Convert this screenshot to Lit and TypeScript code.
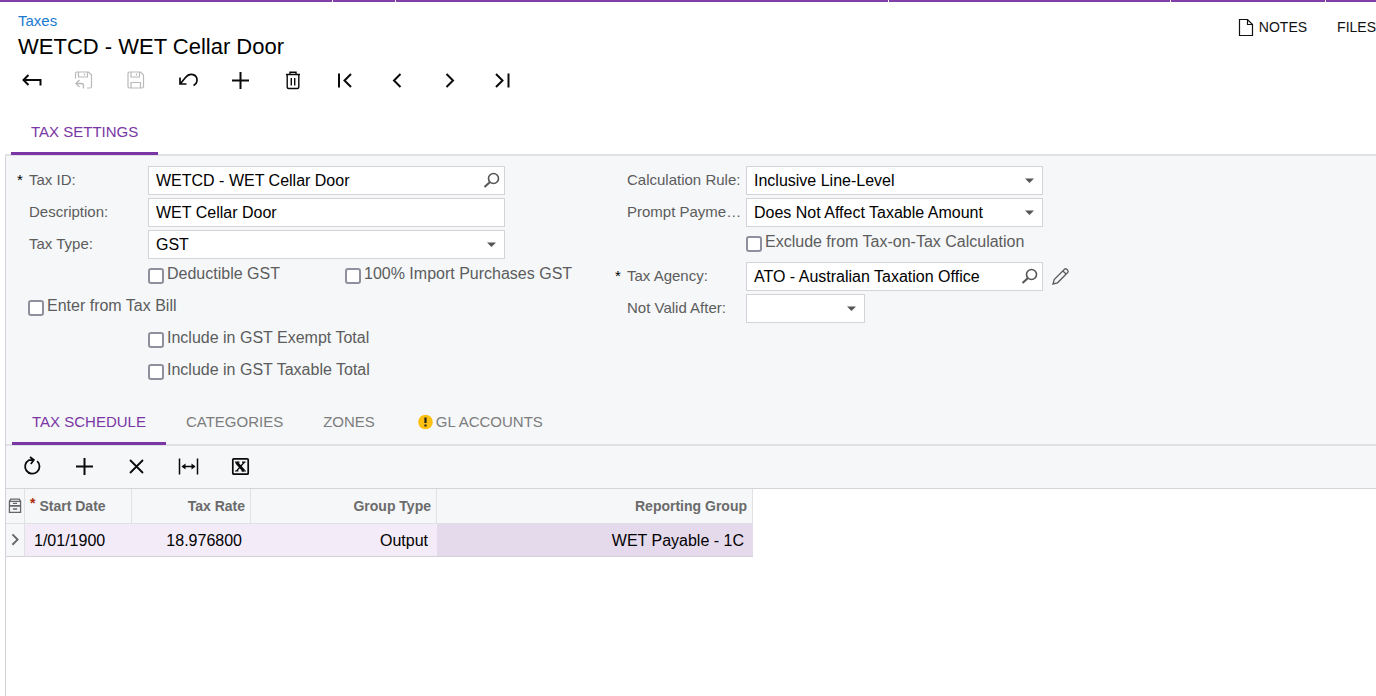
import { LitElement, html, css, svg, nothing } from "lit";
import { customElement, property, state } from "lit/decorators.js";
import { classMap } from "lit/directives/class-map.js";

const shapes: Record<string, unknown> = {
  back: svg`<path d="M1.500 10H18.500V15.500M6.500 5l-5 5 5 5" stroke-width="2"/>`,
  saveBack: svg`<path d="M1.500 8.500V3.500q0-1.500 1.500-1.500H14.500l3 3V16.500q0 1.500-1.500 1.500H13M4.500 2V7H13.500V2M10.500 3.500V5.500"/><path d="M1.800 13.500H7.500q2 0 2 2V18.500M5.500 10l-3.500 3.500 3.500 3.500" stroke-width="1.300"/>`,
  save: svg`<path d="M3.500 2H14.500l3 3V16.500q0 1.500-1.500 1.500H3.500q-1.500 0-1.500-1.500V3.500q0-1.500 1.500-1.500ZM5 2V7H13.500V2M10.500 3.500V5.500M5 18V12.500H14.500V18"/>`,
  undo: svg`<path d="M2.500 13.500L7.500 7.500C12 2 19 4.500 19 10C19 12.500 17.500 14.500 15.500 15.500M2 7.500V14H8.500" stroke-width="1.700"/>`,
  add: svg`<path d="M2 10.500H19M10.500 2V19" stroke-width="2"/>`,
  trash: svg`<path d="M4 4.500H18M8 4V2.300H14V4M5.200 5V17q0 1.500 1.500 1.500H15.300q1.500 0 1.500-1.500V5M9.300 8V15.500M12.700 8V15.500" stroke-width="1.400"/>`,
  first: svg`<path d="M5 3.500V17.500M17 4l-6.500 6.500 6.500 6.500" stroke-width="2"/>`,
  prev: svg`<path d="M14.500 4L8 10.500l6.500 6.500" stroke-width="2"/>`,
  next: svg`<path d="M8.500 4l6.500 6.500L8.500 17" stroke-width="2"/>`,
  last: svg`<path d="M6 4l6.500 6.500L6 17M18.500 3.500V17.500" stroke-width="2"/>`,
  refresh: svg`<path d="M15.200 5.200A7.200 7.200 0 1 1 6.800 4.200L11.500 4M8 1l3.800 3-3 4" stroke-width="1.800"/>`,
  close: svg`<path d="M4 4L17 17M17 4L4 17" stroke-width="1.800"/>`,
  fit: svg`<path d="M1.500 2.500V18.500M19.500 2.500V18.500M4.500 10.500H16.500" stroke-width="1.500"/><path d="M3.500 10.500l4-3v6zM17.500 10.500l-4-3v6z" fill="currentColor" stroke="none"/>`,
  excel: svg`<rect x="2.800" y="2.800" width="15.400" height="15.400" rx="1" stroke-width="1.700"/><path d="M6.500 6.500L14 15" stroke-width="2.800"/><path d="M14.500 6L6.500 15M5 6.200H9.500M12 6.200H15.500M5 15H8.500M11.500 15H16" stroke-width="1.200"/>`,
  search: svg`<circle cx="12.500" cy="8.500" r="5" stroke-width="1.600"/><path d="M9 12L3.500 17" stroke-width="2"/>`,
  pencil: svg`<path d="M3 18L4.200 13.500 14.500 3.200q1-1 2.200.1l1 1q1 1.200 0 2.200L7.500 16.800ZM13 5l3.200 3.200" stroke-width="1.300"/>`,
  note: svg`<path d="M4.500 2.500H12.500L17.500 7.500V18.500H4.500ZM12.500 2.500V7.500H17.500" stroke-width="1.200"/>`,
  caret: svg`<path d="M6 8.500H15L10.500 13Z" fill="currentColor" stroke="none"/>`,
  records: svg`<path d="M5.500 2.500H15.500L17 5V10H4V5ZM4 10.500H17V18H4ZM4 5H17M8 7.500H13M8 14H13" stroke-width="1.500"/>`,
  row: svg`<path d="M7.500 4l6 6-6 6" stroke-width="2.200"/>`,
  warn: svg`<circle cx="10.500" cy="10" r="7.300" fill="#fdc010" stroke="none"/><path d="M10.500 5.500V11M10.500 12.500V14.500" stroke="#222" stroke-width="2.200"/>`,
};

@customElement("ui-icon")
export class UiIcon extends LitElement {
  @property() name = "";
  static styles = css`
    :host { display: inline-flex; flex: none; width: 21px; height: 21px; }
    .glyph { width: 100%; height: 100%; fill: none; stroke: currentColor; stroke-width: 1.2; }
  `;
  render() {
    return html`<svg class="glyph" viewBox="0 0 21 21" aria-hidden="true">${shapes[this.name] ?? nothing}</svg>`;
  }
}

type Action = { icon: string; label: string; disabled?: boolean };

@customElement("app-root")
export class AppRoot extends LitElement {
  @state() private tab = "TAX SCHEDULE";

  private actions: Action[] = [
    { icon: "back", label: "Back" },
    { icon: "saveBack", label: "Save and close", disabled: true },
    { icon: "save", label: "Save", disabled: true },
    { icon: "undo", label: "Undo" },
    { icon: "add", label: "Add" },
    { icon: "trash", label: "Delete" },
    { icon: "first", label: "First" },
    { icon: "prev", label: "Previous" },
    { icon: "next", label: "Next" },
    { icon: "last", label: "Last" },
  ];

  private gridActions: Action[] = [
    { icon: "refresh", label: "Refresh" },
    { icon: "add", label: "Add row" },
    { icon: "close", label: "Delete row" },
    { icon: "fit", label: "Fit columns" },
    { icon: "excel", label: "Export" },
  ];

  static styles = css`
    :host {
      display: flex;
      flex-direction: column;
      min-height: 100vh;
      background: #fff;
      color: #000;
      font-family: "Liberation Sans", Arial, sans-serif;
      font-size: 15px;
      line-height: 20px;
    }
    * { box-sizing: border-box; }
    button, input, select { font: inherit; color: inherit; margin: 0; border-radius: 0; }
    button { border: 0; padding: 0; background: none; }
    .strip { display: grid; grid-template-columns: 332fr 62fr 492fr 281fr 154fr 50fr; gap: 1px; height: 2px; }
    .strip-part { background: #8040a8; }
    .head { display: flex; justify-content: space-between; padding: 9px 0 0 18px; }
    .crumb { display: block; color: #1a7ad0; text-decoration: none; }
    .title { margin: 0; font-size: 22px; font-weight: 400; line-height: 32px; white-space: nowrap; }
    .links { display: flex; align-items: center; gap: 30px; height: 32px; }
    .link { display: flex; align-items: center; gap: 3px; color: #111; font-size: 14px; }
    .tools { display: flex; padding: 0 6px; }
    .main-tools { height: 34px; }
    .grid-tools { height: 42px; padding: 0 0 2px; }
    .tool { display: flex; align-items: center; justify-content: center; width: 52px; height: 100%; color: #0a0a0a; }
    .tool:disabled { color: #b9b9b9; }
    .tabs { display: flex; align-items: flex-end; border-bottom: 2px solid #e0e1e4; }
    .page-tabs { height: 59px; padding-left: 6px; margin-left: 5px; }
    .detail-tabs { height: 49px; padding-left: 6px; }
    .tab { display: flex; align-items: center; height: 45px; margin-bottom: -1px; padding: 2px 20px 0; border-bottom: 3px solid transparent; color: #7c7c7c; white-space: nowrap; }
    .tab.active { color: #7a36a5; border-color: #7a36a5; }
    .panel { flex: 1; margin-left: 5px; border-left: 1px solid #d3d3d7; }
    .form { background: #f5f7f9; display: flex; flex-wrap: wrap; gap: 3px 110px; padding: 10px 11px; color: #5c5c5c; }
    .column { display: grid; grid-template-columns: 131px minmax(0, 357px); grid-auto-rows: 29px; row-gap: 3px; align-items: stretch; align-content: start; }
    .column.second { grid-template-columns: 131px minmax(0, 297px) auto; }
    .label { display: flex; align-items: center; padding-bottom: 2px; white-space: nowrap; }
    .mark { width: 12px; color: #000; flex: none; }
    .field { display: grid; grid-template-columns: minmax(0, 1fr) 26px; color: #000; background: #fff; border: 1px solid #d3d3d8; font-size: 16px; }
    .field.short { width: 119px; }
    .value { grid-area: 1 / 1 / 2 / 3; width: 100%; min-width: 0; border: 0; padding: 0 7px; background: none; appearance: none; outline: none; }
    .adorn { grid-area: 1 / 2; display: flex; align-items: center; justify-content: center; color: #555; pointer-events: none; }
    .search { pointer-events: auto; }
    .edit { display: flex; align-items: center; padding-left: 7px; color: #5c5c5c; }
    .checks { grid-column: 2; display: grid; grid-template-columns: 197px auto; padding-bottom: 2px; font-size: 16px; }
    .checks.outer { grid-column: 1 / 3; padding-left: 11px; }
    .check { display: flex; align-items: center; gap: 3px; white-space: nowrap; }
    .check-text { padding-bottom: 3px; }
    .box { appearance: none; flex: none; width: 16px; height: 16px; border: 2px solid #8f8f9d; border-radius: 3px; background: #fff; }
    .details { background: #f5f7f9; border-bottom: 1px solid #d3d5d8; }
    .grid { width: 747px; max-width: 100%; table-layout: fixed; border-collapse: separate; border-spacing: 0; }
    .c0 { width: 19px; } .c1 { width: 107px; } .c2 { width: 119px; } .c3 { width: 186px; } .c4 { width: 316px; }
    .grid th { height: 35px; padding: 0 5px; background: #f5f7f9; border-right: 1px solid #dfe2e5; border-bottom: 1px solid #dfe2e5; color: #6b6b6b; font-size: 14px; text-align: right; white-space: nowrap; }
    .grid th.start { text-align: left; }
    .grid td { height: 33px; padding: 2px 9px 0; background: #f3ebf8; border-bottom: 1px solid #d6d0db; font-size: 16px; text-align: right; white-space: nowrap; }
    .grid td.start { text-align: left; }
    .grid td.picked { background: #e5d9ec; }
    .grid .gutter { padding: 0; background: #f5f7f9; border-right: 1px solid #dfe2e5; color: #666; text-align: center; }
    .gutter-icon { display: flex; width: 18px; height: 18px; }
    .star { color: #b02a0c; padding-right: 4px; vertical-align: 3px; line-height: 14px; }
  `;

  private tools(list: Action[]) {
    return list.map((a) => html`<button class="tool" ?disabled=${a.disabled} aria-label=${a.label}><ui-icon name=${a.icon}></ui-icon></button>`);
  }

  private label(id: string, text: string, required = false) {
    return html`<label class="label" for=${id}><span class="mark">${required ? "*" : nothing}</span>${text}</label>`;
  }

  private lookup(id: string, value: string) {
    return html`<div class="field">
      <input class="value" id=${id} .value=${value} />
      <button class="adorn search" aria-label="Find"><ui-icon name="search"></ui-icon></button>
    </div>`;
  }

  private select(id: string, value: string, short = false) {
    return html`<div class=${classMap({ field: true, short })}>
      <select class="value" id=${id}><option>${value}</option></select>
      <span class="adorn"><ui-icon name="caret"></ui-icon></span>
    </div>`;
  }

  private check(text: string) {
    return html`<label class="check"><input class="box" type="checkbox" /><span class="check-text">${text}</span></label>`;
  }

  private tabButton(text: string, icon?: string) {
    return html`<button class=${classMap({ tab: true, active: this.tab === text })} role="tab"
      aria-selected=${this.tab === text ? "true" : "false"} @click=${() => (this.tab = text)}>
      ${icon ? html`<ui-icon name=${icon}></ui-icon>` : nothing}${text}</button>`;
  }

  render() {
    return html`
      <div class="strip">${[0, 1, 2, 3, 4, 5].map(() => html`<span class="strip-part"></span>`)}</div>
      <header class="head">
        <div>
          <a class="crumb" href="#taxes">Taxes</a>
          <h1 class="title">WETCD - WET Cellar Door</h1>
        </div>
        <nav class="links">
          <button class="link"><ui-icon name="note"></ui-icon>NOTES</button>
          <button class="link">FILES</button>
        </nav>
      </header>
      <div class="tools main-tools">${this.tools(this.actions)}</div>
      <div class="tabs page-tabs" role="tablist">
        <button class="tab active" role="tab" aria-selected="true">TAX SETTINGS</button>
      </div>
      <main class="panel">
        <form class="form" @submit=${(e: Event) => e.preventDefault()}>
          <div class="column">
            ${this.label("tax-id", "Tax ID:", true)}${this.lookup("tax-id", "WETCD - WET Cellar Door")}
            ${this.label("description", "Description:")}
            <div class="field"><input class="value" id="description" .value=${"WET Cellar Door"} /></div>
            ${this.label("tax-type", "Tax Type:")}${this.select("tax-type", "GST")}
            <div class="checks">${this.check("Deductible GST")}${this.check("100% Import Purchases GST")}</div>
            <div class="checks outer">${this.check("Enter from Tax Bill")}</div>
            <div class="checks">${this.check("Include in GST Exempt Total")}</div>
            <div class="checks">${this.check("Include in GST Taxable Total")}</div>
          </div>
          <div class="column second">
            ${this.label("rule", "Calculation Rule:")}${this.select("rule", "Inclusive Line-Level")}<span></span>
            ${this.label("prompt", "Prompt Payme…")}${this.select("prompt", "Does Not Affect Taxable Amount")}<span></span>
            <div class="checks">${this.check("Exclude from Tax-on-Tax Calculation")}</div><span></span>
            ${this.label("agency", "Tax Agency:", true)}${this.lookup("agency", "ATO - Australian Taxation Office")}
            <button class="edit" aria-label="Edit"><ui-icon name="pencil"></ui-icon></button>
            ${this.label("after", "Not Valid After:")}${this.select("after", "", true)}
          </div>
        </form>
        <section class="details">
          <div class="tabs detail-tabs" role="tablist">
            ${this.tabButton("TAX SCHEDULE")}${this.tabButton("CATEGORIES")}${this.tabButton("ZONES")}${this.tabButton("GL ACCOUNTS", "warn")}
          </div>
          <div class="tools grid-tools">${this.tools(this.gridActions)}</div>
        </section>
        <table class="grid">
          <colgroup><col class="c0" /><col class="c1" /><col class="c2" /><col class="c3" /><col class="c4" /></colgroup>
          <thead>
            <tr>
              <th class="gutter"><ui-icon class="gutter-icon" name="records"></ui-icon></th>
              <th class="start"><span class="star">*</span>Start Date</th>
              <th>Tax Rate</th>
              <th>Group Type</th>
              <th>Reporting Group</th>
            </tr>
          </thead>
          <tbody>
            <tr>
              <td class="gutter"><ui-icon class="gutter-icon" name="row"></ui-icon></td>
              <td class="start">1/01/1900</td>
              <td>18.976800</td>
              <td>Output</td>
              <td class="picked">WET Payable - 1C</td>
            </tr>
          </tbody>
        </table>
      </main>
    `;
  }
}
